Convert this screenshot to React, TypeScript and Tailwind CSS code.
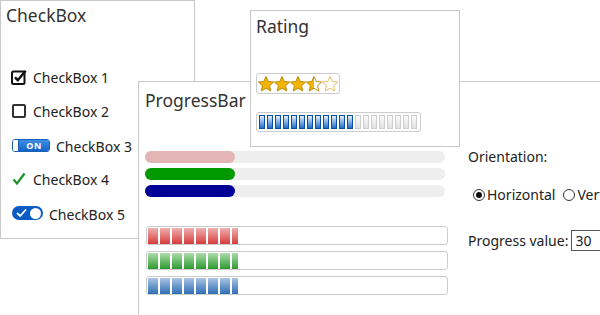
import React from 'react';

const font = { fontFamily: '"Noto Sans", "Open Sans", sans-serif' };

const STAR = '8,0.5 10.23,5.43 15.61,6.03 11.61,9.67 12.7,14.97 8,12.3 3.3,14.97 4.39,9.67 0.39,6.03 5.77,5.43';

function Star({ fill, id }: { fill: 'full' | 'half' | 'empty'; id: string }) {
  return (
    <svg width="16" height="16" viewBox="0 0 16 16">
      <defs>
        <linearGradient id={id} x1="0" x2="1" y1="0" y2="0">
          <stop offset="0.5" stopColor="#f2b400" />
          <stop offset="0.5" stopColor="#ffffff" />
        </linearGradient>
      </defs>
      <polygon
        points={STAR}
        fill={fill === 'full' ? '#f2b400' : fill === 'half' ? `url(#${id})` : '#ffffff'}
        stroke={fill === 'empty' ? '#e2b25a' : '#b98400'}
        strokeWidth="0.9"
        strokeLinejoin="round"
      />
    </svg>
  );
}

function CheckedBox() {
  return (
    <svg width="16" height="16" viewBox="0 0 16 16">
      <rect x="1" y="2.5" width="12.5" height="12.5" rx="1.5" fill="none" stroke="#111" strokeWidth="2" />
      <path d="M4 8.3 L6.8 11.2 L14.6 1.8" fill="none" stroke="#111" strokeWidth="2.5" />
    </svg>
  );
}

function SegBar({ from, to }: { from: string; to: string }) {
  const segs = [10, 10, 10, 10, 10, 10, 10, 6];
  return (
    <div className="h-[19px] w-[302px] rounded-[3px] border border-[#cccccc] bg-white flex items-center gap-[2px] px-[1px]">
      {segs.map((w, i) => (
        <div
          key={i}
          className="h-[16px]"
          style={{ width: w, background: `linear-gradient(${from}, ${to})` }}
        />
      ))}
    </div>
  );
}

function RoundBar({ color }: { color: string }) {
  return (
    <div className="h-[12px] w-[300px] rounded-full bg-[#eeeeee]">
      <div className="h-[12px] w-[90px] rounded-full" style={{ background: color }} />
    </div>
  );
}

export default function App() {
  return (
    <div className="relative w-[600px] h-[315px] overflow-hidden bg-white text-[#222]" style={font}>
      {/* CheckBox window */}
      <div className="absolute left-0 top-0 w-[195px] h-[239px] border border-[#c8c8c8] bg-white">
        <div className="pl-[5px] pt-[3px] text-[17.5px] leading-[23px] text-[#333]">CheckBox</div>
        <div className="mt-[33px] flex flex-col pl-[10px] text-[14px]">
          <div className="h-[34px] flex items-center gap-[6px]">
            <CheckedBox />
            <span>CheckBox 1</span>
          </div>
          <div className="h-[34px] flex items-center gap-[7px]">
            <div className="ml-px w-[14px] h-[14px] rounded-[2px] border-2 border-[#333]" />
            <span>CheckBox 2</span>
          </div>
          <div className="h-[34px] flex items-center gap-[6px]">
            <div className="ml-px flex h-[13px] w-[38px] overflow-hidden rounded-[3px] border border-[#1a5fb4]">
              <div className="w-[6px] bg-white border-r border-[#1a5fb4]" />
              <div className="flex-1 flex items-center justify-center bg-gradient-to-b from-[#3c8fe6] to-[#1264c8] text-[9px] font-bold leading-none text-white tracking-[0.5px]">
                ON
              </div>
            </div>
            <span className="mt-[3px]">CheckBox 3</span>
          </div>
          <div className="h-[34px] flex items-center gap-[7px]">
            <svg width="14" height="14" viewBox="0 0 14 14" className="ml-px">
              <path d="M1.5 7.5 L5 11.5 L12.5 1.5" fill="none" stroke="#1f8f2a" strokeWidth="2.2" />
            </svg>
            <span>CheckBox 4</span>
          </div>
          <div className="h-[34px] flex items-center gap-[6px]">
            <div className="ml-px flex h-[14px] w-[31px] items-center rounded-full bg-[#0b5bc4] px-[2px]">
              <svg width="14" height="10" viewBox="0 0 14 10" className="ml-[1px]">
                <path d="M2 5 L5.2 8 L11 1.5" fill="none" stroke="#fff" strokeWidth="1.8" />
              </svg>
              <div className="ml-auto h-[11px] w-[11px] rounded-full bg-white" />
            </div>
            <span className="mt-[3px]">CheckBox 5</span>
          </div>
        </div>
      </div>

      {/* ProgressBar window */}
      <div className="absolute left-[138px] top-[81px] w-[480px] h-[250px] border border-[#c8c8c8] bg-white flex">
        <div className="w-[320px] shrink-0 pl-[6px]">
          <div className="pt-[7px] text-[17.5px] leading-[23px] text-[#333]">ProgressBar</div>
          <div className="mt-[39px] flex flex-col gap-[5px]">
            <RoundBar color="#e3b5b5" />
            <RoundBar color="#009a00" />
            <RoundBar color="#000096" />
          </div>
          <div className="mt-[29px] ml-px flex flex-col gap-[6px]">
            <SegBar from="#f0b0b0" to="#d63c3c" />
            <SegBar from="#acdcac" to="#2e9a2e" />
            <SegBar from="#abc4e2" to="#2f6db5" />
          </div>
        </div>
        <div className="pl-[9px] pt-[65px] text-[14px] whitespace-nowrap">
          <div className="leading-[20px]">Orientation:</div>
          <div className="mt-[18px] flex items-center leading-[20px]">
            <span className="ml-[5px] flex h-[12px] w-[12px] items-center justify-center rounded-full border border-[#333] bg-white">
              <span className="h-[6px] w-[6px] rounded-full bg-[#111]" />
            </span>
            <span className="ml-[2px]">Horizontal</span>
            <span className="ml-[8px] h-[12px] w-[12px] rounded-full border border-[#333] bg-white" />
            <span className="ml-[2px]">Vertical</span>
          </div>
          <div className="mt-[25px] flex items-center leading-[20px]">
            <span>Progress value:</span>
            <div className="ml-[3px] h-[21px] w-[60px] border border-[#555] pl-[3px] leading-[19px]">30</div>
          </div>
        </div>
      </div>

      {/* Rating window */}
      <div className="absolute left-[250px] top-[10px] w-[210px] h-[137px] border border-[#c8c8c8] bg-white pl-[5px]">
        <div className="pt-[4px] text-[17.5px] leading-[23px] text-[#333]">Rating</div>
        <div className="mt-[35px] flex h-[21px] w-[84px] items-center rounded-[3px] border border-[#cccccc] px-px">
          <Star fill="full" id="s1" />
          <Star fill="full" id="s2" />
          <Star fill="full" id="s3" />
          <Star fill="half" id="s4" />
          <Star fill="empty" id="s5" />
        </div>
        <div className="mt-[18px] flex h-[20px] w-[165px] items-center gap-[2px] rounded-[3px] border border-[#cccccc] px-[2px]">
          {Array.from({ length: 20 }).map((_, i) => (
            <div
              key={i}
              className={
                i < 12
                  ? 'h-[14px] w-[6px] border border-[#0a4fa8] bg-gradient-to-b from-[#e6f0fb] to-[#1f6cc8]'
                  : 'h-[14px] w-[6px] border border-[#cfcfcf] bg-gradient-to-b from-[#fafafa] to-[#e2e2e2]'
              }
            />
          ))}
        </div>
      </div>
    </div>
  );
}
